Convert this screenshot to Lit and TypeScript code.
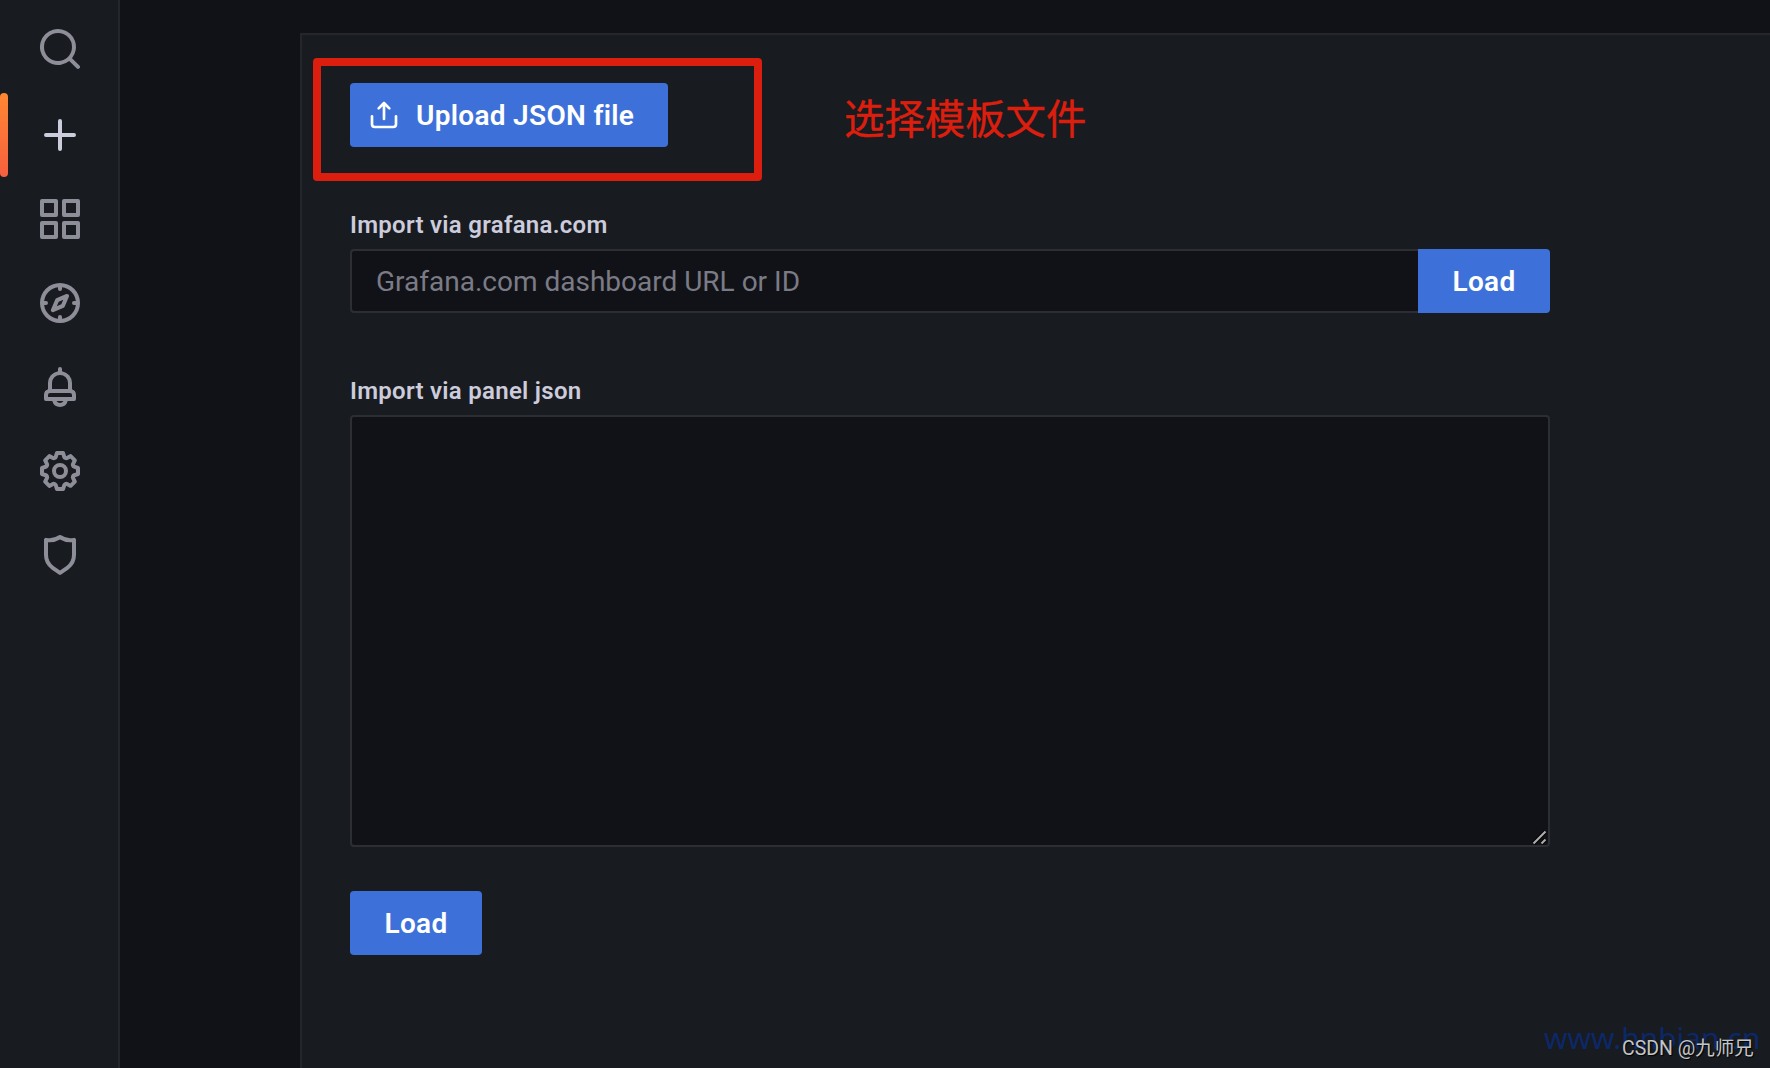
import { LitElement, html, css, svg } from 'lit'
import { customElement, property } from 'lit/decorators.js'
import { classMap } from 'lit/directives/class-map.js'

const ICONS: Record<string, string> = {
  search: 'M21.71,20.29,18,16.61A9,9,0,1,0,16.61,18l3.68,3.68a1,1,0,0,0,1.42,0A1,1,0,0,0,21.71,20.29ZM11,18a7,7,0,1,1,7-7A7,7,0,0,1,11,18Z',
  plus: 'M19,11H13V5a1,1,0,0,0-2,0v6H5a1,1,0,0,0,0,2h6v6a1,1,0,0,0,2,0V13h6a1,1,0,0,0,0-2Z',
  apps: 'M10,13H3a1,1,0,0,0-1,1v7a1,1,0,0,0,1,1h7a1,1,0,0,0,1-1V14A1,1,0,0,0,10,13ZM9,20H4V15H9ZM21,2H14a1,1,0,0,0-1,1v7a1,1,0,0,0,1,1h7a1,1,0,0,0,1-1V3A1,1,0,0,0,21,2ZM20,9H15V4h5Zm1,4H14a1,1,0,0,0-1,1v7a1,1,0,0,0,1,1h7a1,1,0,0,0,1-1V14A1,1,0,0,0,21,13Zm-1,7H15V15h5ZM10,2H3A1,1,0,0,0,2,3v7a1,1,0,0,0,1,1h7a1,1,0,0,0,1-1V3A1,1,0,0,0,10,2ZM9,9H4V4H9Z',
  compass: 'M12,2A10,10,0,1,0,22,12,10,10,0,0,0,12,2Zm1,17.93V19a1,1,0,0,0-2,0v.93A8,8,0,0,1,4.07,13H5a1,1,0,0,0,0-2H4.07A8,8,0,0,1,11,4.07V5a1,1,0,0,0,2,0V4.07A8,8,0,0,1,19.93,11H19a1,1,0,0,0,0,2h.93A8,8,0,0,1,13,19.93ZM15.14,7.55l-5,2.12a1,1,0,0,0-.52.52l-2.12,5a1,1,0,0,0,.21,1.1,1,1,0,0,0,.7.3.93.93,0,0,0,.4-.09l5-2.12a1,1,0,0,0,.52-.52l2.12-5a1,1,0,0,0-1.31-1.31Zm-2.49,5.1-2.28,1,1-2.28,2.28-1Z',
  bell: 'M18,13.18V10a6,6,0,0,0-5-5.91V3a1,1,0,0,0-2,0V4.09A6,6,0,0,0,6,10v3.18A3,3,0,0,0,4,16v2a1,1,0,0,0,1,1H8.14a4,4,0,0,0,7.72,0H19a1,1,0,0,0,1-1V16A3,3,0,0,0,18,13.18ZM8,10a4,4,0,0,1,8,0v3H8Zm4,10a2,2,0,0,1-1.72-1h3.44A2,2,0,0,1,12,20Zm6-3H6V16a1,1,0,0,1,1-1H17a1,1,0,0,1,1,1Z',
  cog: 'M21.32,9.55l-1.89-.63.89-1.78A1,1,0,0,0,20.13,6L18,3.87a1,1,0,0,0-1.15-.19l-1.78.89-.63-1.89A1,1,0,0,0,13.5,2h-3a1,1,0,0,0-.95.68L8.92,4.57,7.14,3.68A1,1,0,0,0,6,3.87L3.87,6a1,1,0,0,0-.19,1.15l.89,1.78-1.89.63A1,1,0,0,0,2,10.5v3a1,1,0,0,0,.68.95l1.89.63-.89,1.78A1,1,0,0,0,3.87,18L6,20.13a1,1,0,0,0,1.15.19l1.78-.89.63,1.89a1,1,0,0,0,.95.68h3a1,1,0,0,0,.95-.68l.63-1.89,1.78.89A1,1,0,0,0,18,20.13L20.13,18a1,1,0,0,0,.19-1.15l-.89-1.78,1.89-.63A1,1,0,0,0,22,13.5v-3A1,1,0,0,0,21.32,9.55ZM20,12.78l-1.2.4A2,2,0,0,0,17.64,16l.57,1.14-1.1,1.1L16,17.64a2,2,0,0,0-2.79,1.16l-.4,1.2H11.22l-.4-1.2A2,2,0,0,0,8,17.64l-1.14.57-1.1-1.1L6.36,16A2,2,0,0,0,5.2,13.18L4,12.78V11.22l1.2-.4A2,2,0,0,0,6.36,8L5.79,6.89l1.1-1.1L8,6.36A2,2,0,0,0,10.82,5.2l.4-1.2h1.56l.4,1.2A2,2,0,0,0,16,6.36l1.14-.57,1.1,1.1L17.64,8a2,2,0,0,0,1.16,2.79l1.2.4ZM12,8a4,4,0,1,0,4,4A4,4,0,0,0,12,8Zm0,6a2,2,0,1,1,2-2A2,2,0,0,1,12,14Z',
  shield: 'M19.63,3.65a1,1,0,0,0-.84-.2,8,8,0,0,1-6.22-1.27,1,1,0,0,0-1.14,0A8,8,0,0,1,5.21,3.45a1,1,0,0,0-.84.2A1,1,0,0,0,4,4.43v7.45a9,9,0,0,0,3.77,7.33l3.65,2.6a1,1,0,0,0,1.16,0l3.65-2.6A9,9,0,0,0,20,11.88V4.43A1,1,0,0,0,19.63,3.65ZM18,11.88a7,7,0,0,1-2.93,5.7L12,19.77,8.93,17.58A7,7,0,0,1,6,11.88V5.58a10,10,0,0,0,6-1.39,10,10,0,0,0,6,1.39Z',
  upload: 'M8.71,7.71,11,5.41V15a1,1,0,0,0,2,0V5.41l2.29,2.3a1,1,0,0,0,1.42,0,1,1,0,0,0,0-1.42l-4-4a1,1,0,0,0-.33-.21,1,1,0,0,0-.76,0,1,1,0,0,0-.33.21l-4,4A1,1,0,1,0,8.71,7.71ZM21,12a1,1,0,0,0-1,1v6a1,1,0,0,1-1,1H5a1,1,0,0,1-1-1V13a1,1,0,0,0-2,0v6a3,3,0,0,0,3,3H19a3,3,0,0,0,3-3V13A1,1,0,0,0,21,12Z',
}

@customElement('ui-icon')
class UiIcon extends LitElement {
  @property() name = ''

  static styles = css`
    :host {
      display: block;
      width: 48px;
      height: 48px;
    }
    svg {
      display: block;
      width: 100%;
      height: 100%;
      fill: currentColor;
    }
  `

  render() {
    return html`
      <svg viewBox="0 0 24 24" aria-hidden="true">
        ${svg`<path d=${ICONS[this.name] ?? ''}></path>`}
      </svg>
    `
  }
}

@customElement('side-menu')
class SideMenu extends LitElement {
  @property() active = 'plus'

  static styles = css`
    :host {
      display: block;
      box-sizing: border-box;
      width: 120px;
      flex: none;
      padding-top: 7px;
      background: #181b1f;
      border-right: 2px solid #25262b;
    }
    nav {
      display: flex;
      flex-direction: column;
    }
    .item {
      position: relative;
      display: flex;
      align-items: center;
      justify-content: center;
      width: 120px;
      height: 84px;
      padding: 0;
      border: none;
      background: none;
      color: #8e8e99;
    }
    .search {
      margin-bottom: 2px;
    }
    .active {
      color: #ccccdc;
    }
    .active::before {
      content: '';
      position: absolute;
      left: 0;
      top: 0;
      bottom: 0;
      width: 8px;
      border-radius: 4px;
      background: linear-gradient(#ff8833, #f55f3e);
    }
  `

  render() {
    const items = ['search', 'plus', 'apps', 'compass', 'bell', 'cog', 'shield']
    return html`
      <nav>
        ${items.map((name) => html`
          <button
            class=${classMap({ item: true, search: name === 'search', active: name === this.active })}
            aria-label=${name}
          >
            <ui-icon name=${name}></ui-icon>
          </button>
        `)}
      </nav>
    `
  }
}

@customElement('import-form')
class ImportForm extends LitElement {
  static styles = css`
    :host {
      display: block;
      position: relative;
      width: 1200px;
    }
    button {
      display: flex;
      align-items: center;
      justify-content: center;
      box-sizing: border-box;
      height: 64px;
      width: 132px;
      padding: 0;
      border: none;
      border-radius: 4px;
      background: #3d71d9;
      color: #fff;
      font: 600 28px/64px Roboto, sans-serif;
      letter-spacing: 0.3px;
      white-space: nowrap;
    }
    button span {
      padding-top: 2px;
      line-height: 62px;
    }
    .upload {
      width: 318px;
      justify-content: flex-start;
      gap: 16px;
      padding-left: 18px;
    }
    .upload ui-icon {
      width: 32px;
      height: 32px;
    }
    label {
      display: block;
      font-size: 24px;
      font-weight: 600;
      line-height: 30px;
      letter-spacing: 0.28px;
      margin-bottom: 9px;
    }
    .gcom {
      margin-top: 63px;
    }
    .row {
      display: flex;
    }
    input {
      flex: 1;
      min-width: 0;
      box-sizing: border-box;
      height: 64px;
      padding: 0 24px;
      border: 2px solid #2d2e34;
      border-right: none;
      border-radius: 4px 0 0 4px;
      background: #111217;
      color: #ccccdc;
      font: 400 28px Roboto, sans-serif;
      outline: none;
    }
    input::placeholder {
      color: #7b7b86;
      opacity: 1;
    }
    .row button {
      border-radius: 0 4px 4px 0;
    }
    .json {
      margin-top: 63px;
    }
    .editor {
      position: relative;
      height: 432px;
      margin-bottom: 44px;
    }
    textarea {
      display: block;
      box-sizing: border-box;
      width: 100%;
      height: 100%;
      resize: none;
      border: 2px solid #2d2e34;
      border-radius: 4px;
      background: #111217;
      color: #ccccdc;
      outline: none;
    }
    .grip {
      position: absolute;
      right: 3px;
      bottom: 2px;
      width: 15px;
      height: 15px;
    }
    .frame {
      position: absolute;
      left: -37.5px;
      top: -24.6px;
      box-sizing: border-box;
      width: 449.5px;
      height: 122.6px;
      border: 8px solid #dc1e0e;
      border-radius: 4px;
      pointer-events: none;
    }
    .note {
      position: absolute;
      left: 494px;
      top: 5px;
      color: #dc1e0e;
      font: 400 40.4px/58px 'Noto Sans CJK SC', sans-serif;
      -webkit-text-stroke: 0.4px #dc1e0e;
      white-space: nowrap;
    }
  `

  render() {
    return html`
      <button class="upload"><ui-icon name="upload"></ui-icon><span>Upload JSON file</span></button>

      <div class="gcom">
        <label for="gcom">Import via grafana.com</label>
        <div class="row">
          <input id="gcom" placeholder="Grafana.com dashboard URL or ID" />
          <button><span>Load</span></button>
        </div>
      </div>

      <div class="json">
        <label for="json">Import via panel json</label>
        <div class="editor">
          <textarea id="json"></textarea>
          <svg class="grip" viewBox="0 0 15 15" aria-hidden="true">
            <path d="M1.5 13.5L13.5 1.5M9.5 13.5L13.5 9.5" stroke="#000" stroke-width="4" />
            <path d="M1.5 13.5L13.5 1.5M9.5 13.5L13.5 9.5" stroke="#aaa" stroke-width="2.2" />
          </svg>
        </div>
        <button><span>Load</span></button>
      </div>

      <div class="frame"></div>
      <div class="note">选择模板文件</div>
    `
  }
}

@customElement('app-root')
class AppRoot extends LitElement {
  static styles = css`
    :host {
      position: relative;
      display: flex;
      width: 100%;
      height: 100vh;
      overflow: hidden;
      background: #111217;
      color: #ccccdc;
      font-family: Roboto, sans-serif;
    }
    main {
      flex: 1;
      min-width: 0;
      box-sizing: border-box;
      padding: 33px 0 0 180px;
    }
    .panel {
      box-sizing: border-box;
      height: 100%;
      padding: 48px 0 0 48px;
      background: #181b1f;
      border: 2px solid #25262b;
      border-width: 2px 0 0 2px;
    }
    .site,
    .credit {
      position: absolute;
      white-space: nowrap;
    }
    .site {
      left: 1544px;
      top: 1017px;
      color: #0c2868;
      font: 400 29.9px/42px 'Noto Sans', sans-serif;
    }
    .credit {
      left: 1622px;
      top: 1035px;
      color: #c4c5c7;
      font: 400 19.5px/28px Roboto, 'Noto Sans CJK SC', sans-serif;
      text-shadow: 1px 1px 1px #000;
    }
  `

  render() {
    return html`
      <side-menu></side-menu>
      <main>
        <div class="panel">
          <import-form></import-form>
        </div>
      </main>
      <div class="site">www.hnbian.cn</div>
      <div class="credit">CSDN @九师兄</div>
    `
  }
}
